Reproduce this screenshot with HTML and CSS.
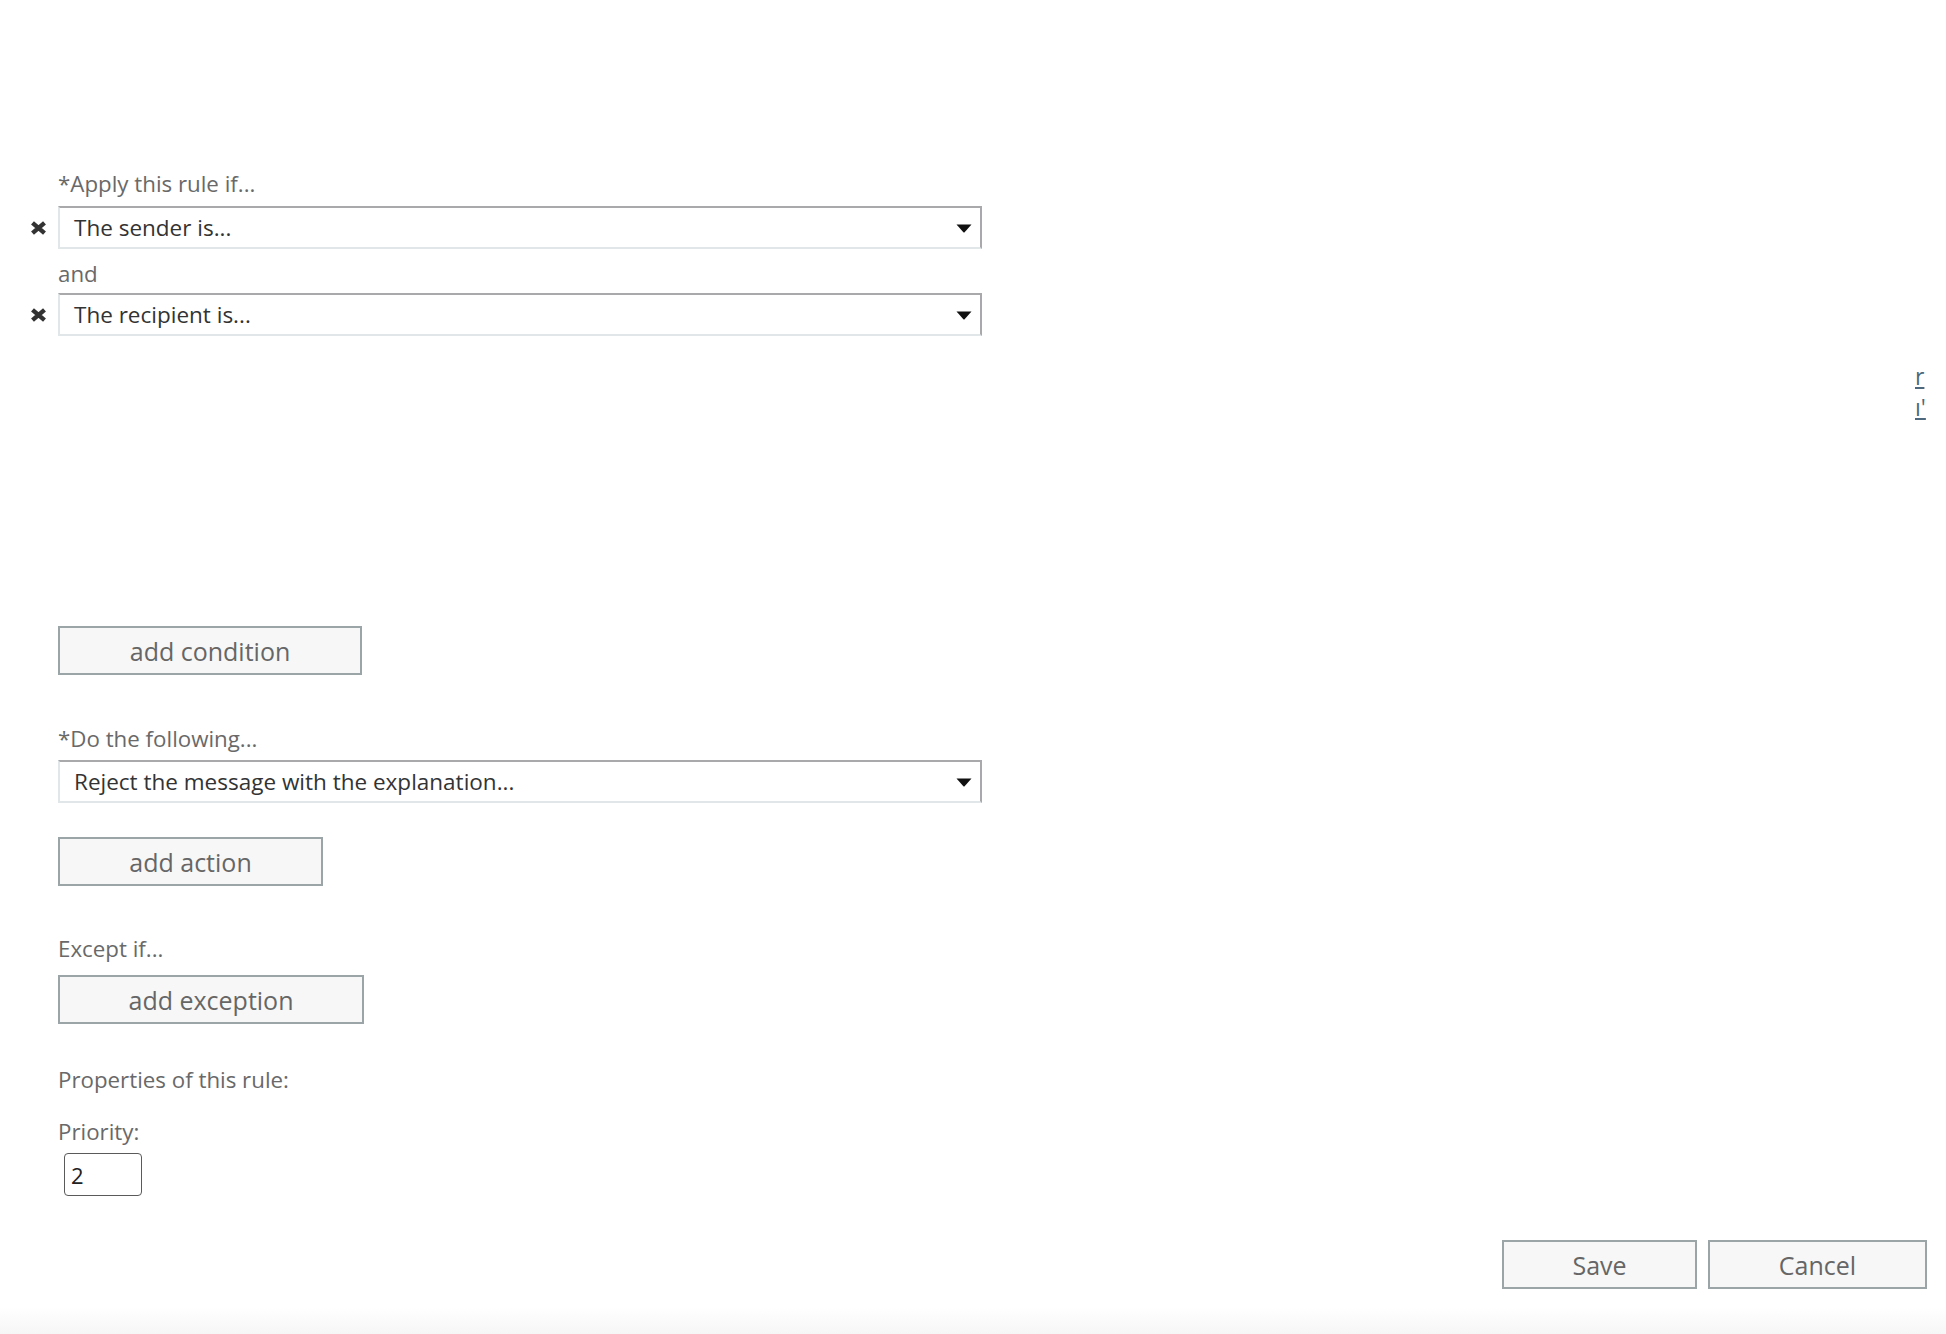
FILE: index.html
```html
<!DOCTYPE html>
<html lang="en">
<head>
<meta charset="utf-8">
<title>New rule</title>
<link rel="stylesheet" href="styles.css">
</head>
<body>
<div class="page">
  <div class="main">
    <div class="form">
      <div class="label label-apply">*Apply this rule if...</div>
      <div class="cond-row">
        <span class="remove" title="remove">
          <svg width="17" height="14" viewBox="0 0 17 14"><path d="M2.5 1.8 L14.5 12.2 M14.5 1.8 L2.5 12.2" stroke="#333" stroke-width="4.4" fill="none"/></svg>
        </span>
        <div class="select">
          <span>The sender is...</span>
          <svg class="caret" width="16" height="9" viewBox="0 0 16 9"><path d="M0.5 0.5 H15.5 L8.6 8.2 Q8 8.8 7.4 8.2 Z" fill="#111"/></svg>
        </div>
      </div>
      <div class="label label-and">and</div>
      <div class="cond-row">
        <span class="remove" title="remove">
          <svg width="17" height="14" viewBox="0 0 17 14"><path d="M2.5 1.8 L14.5 12.2 M14.5 1.8 L2.5 12.2" stroke="#333" stroke-width="4.4" fill="none"/></svg>
        </span>
        <div class="select">
          <span>The recipient is...</span>
          <svg class="caret" width="16" height="9" viewBox="0 0 16 9"><path d="M0.5 0.5 H15.5 L8.6 8.2 Q8 8.8 7.4 8.2 Z" fill="#111"/></svg>
        </div>
      </div>
      <button class="btn btn-condition">add condition</button>

      <div class="label label-do">*Do the following...</div>
      <div class="select select-action">
        <span>Reject the message with the explanation...</span>
        <svg class="caret" width="16" height="9" viewBox="0 0 16 9"><path d="M0.5 0.5 H15.5 L8.6 8.2 Q8 8.8 7.4 8.2 Z" fill="#111"/></svg>
      </div>
      <button class="btn btn-action">add action</button>

      <div class="label label-except">Except if...</div>
      <button class="btn btn-exception">add exception</button>

      <div class="label label-props">Properties of this rule:</div>
      <div class="label label-priority">Priority:</div>
      <input class="priority" type="text" value="2">
    </div>
    <div class="side">
      <a href="#" class="side-link">r</a>
      <a href="#" class="side-link">ı'</a>
    </div>
  </div>
  <div class="actions">
    <button class="btn btn-save">Save</button>
    <button class="btn btn-cancel">Cancel</button>
  </div>
  <div class="footer-shade"></div>
</div>
</body>
</html>
```

FILE: styles.css
```css
html, body {
  margin: 0;
  padding: 0;
  background: #ffffff;
}

body {
  font-family: "Open Sans", "Noto Sans", "Liberation Sans", sans-serif;
  overflow: hidden;
}

.page {
  width: 1946px;
  height: 1334px;
  display: flex;
  flex-direction: column;
}

.main {
  flex: 1;
  display: flex;
}

.form {
  flex: 1;
  display: flex;
  flex-direction: column;
  align-items: flex-start;
  padding: 169px 0 0 22px;
}

.label {
  font-size: 22.3px;
  line-height: 30px;
  color: #696969;
  margin-left: 36px;
  white-space: nowrap;
}

.label-apply { margin-bottom: 7px; }
.label-and { margin-top: 10px; margin-bottom: 4px; }
.label-do { margin-top: 49px; margin-bottom: 6px; }
.label-except { margin-top: 48px; margin-bottom: 11px; }
.label-props { margin-top: 41px; }
.label-priority { margin-top: 22px; margin-bottom: 6px; }

.cond-row {
  display: flex;
  align-items: center;
}

.remove {
  width: 36px;
  box-sizing: border-box;
  padding-left: 8px;
  display: flex;
  align-items: center;
}

.select {
  width: 924px;
  height: 43px;
  box-sizing: border-box;
  border-style: solid;
  border-width: 2px;
  border-color: #a9a9ab #a9a9ab #e1e6e9 #e1e6e9;
  background: #ffffff;
  display: flex;
  align-items: center;
  justify-content: space-between;
  padding: 0 8px 0 14px;
  font-size: 22.5px;
  color: #333333;
  white-space: nowrap;
}

.select-action {
  margin-left: 36px;
}

.caret {
  display: block;
  margin-top: 2px;
}

.btn {
  box-sizing: border-box;
  height: 49px;
  border: 2px solid #9ba5a8;
  background: #f7f7f7;
  color: #666666;
  font-family: "Open Sans", "Noto Sans", "Liberation Sans", sans-serif;
  font-size: 25px;
  padding: 0;
  cursor: pointer;
}

.btn-condition { width: 304px; margin-left: 36px; margin-top: 290px; }
.btn-action { width: 265px; margin-left: 36px; margin-top: 34px; }
.btn-exception { width: 306px; margin-left: 36px; }

.priority {
  box-sizing: border-box;
  width: 78px;
  height: 43px;
  margin-left: 42px;
  border: 1.5px solid #5a5a5a;
  border-radius: 4px;
  padding: 0 0 0 6px;
  font-family: "Open Sans", "Noto Sans", "Liberation Sans", sans-serif;
  font-size: 22px;
  color: #222222;
  background: #ffffff;
}

.side {
  width: 31px;
  overflow: hidden;
  padding-top: 361px;
  display: flex;
  flex-direction: column;
  box-sizing: border-box;
}

.side-link {
  font-size: 23px;
  line-height: 31px;
  color: #4d687d;
  text-decoration: underline;
  white-space: nowrap;
}

.actions {
  display: flex;
  justify-content: flex-end;
  gap: 11px;
  padding: 0 19px 18px 0;
}

.btn-save { width: 195px; }
.btn-cancel { width: 219px; }

.footer-shade {
  height: 27px;
  background: linear-gradient(#ffffff, #f6f6f6);
}
```
